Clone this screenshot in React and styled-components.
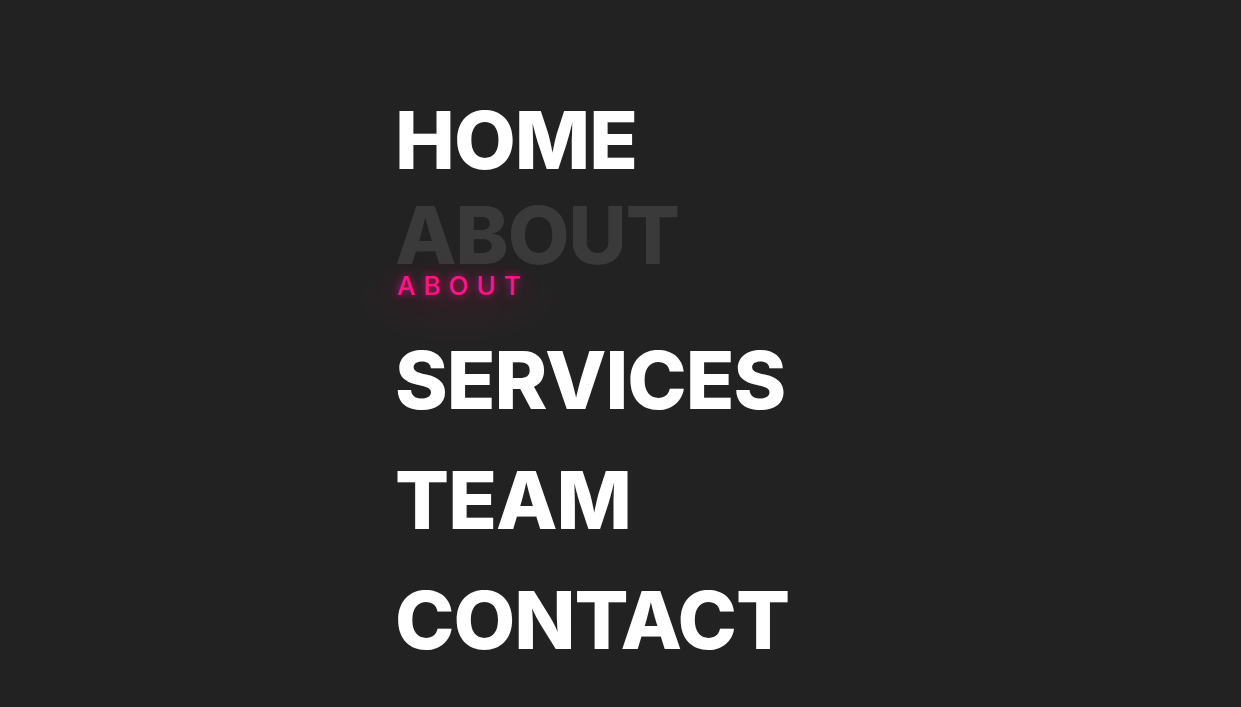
import React from "react";
import styled, { createGlobalStyle } from "styled-components";

const Global = createGlobalStyle`
  html, body { margin: 0; padding: 0; background: #222222; }
  body { font-family: "Inter", "Noto Sans", sans-serif; }
`;

const Page = styled.div`
  min-height: 707px;
  background: #222222;
  display: flex;
  justify-content: flex-start;
`;

const Menu = styled.ul`
  list-style: none;
  margin: 0;
  padding: 80px 0 0 395px;
  display: flex;
  flex-direction: column;
`;

const Item = styled.li`
  position: relative;
  height: 120px;
`;

const Link = styled.a`
  display: block;
  font-family: "Inter", "Noto Sans", sans-serif;
  font-weight: 800;
  font-size: 80px;
  line-height: 120px;
  letter-spacing: -1px;
  text-transform: uppercase;
  color: ${(p) => (p.$active ? "#3a3a3a" : "#ffffff")};
  transform: ${(p) => (p.$active ? "translateY(-25px)" : "none")};
  text-decoration: none;
  white-space: nowrap;
`;

const Label = styled.span`
  position: absolute;
  left: 2px;
  top: 73px;
  font-family: "Inter", "Noto Sans", sans-serif;
  font-weight: 500;
  font-size: 26px;
  letter-spacing: 8px;
  line-height: 26px;
  color: #ff1489;
  text-transform: uppercase;
  text-shadow: 0 0 8px rgba(255, 20, 137, 0.7), 0 0 30px rgba(255, 20, 137, 0.25);
  &::before {
    content: "";
    position: absolute;
    left: -50px;
    top: -25px;
    width: 220px;
    height: 100px;
    border-radius: 50%;
    background: radial-gradient(ellipse at center, rgba(255, 20, 100, 0.06), rgba(255, 20, 100, 0) 70%);
    pointer-events: none;
  }
`;

const items = ["Home", "About", "Services", "Team", "Contact"];

export default function App() {
  return (
    <>
      <Global />
      <Page>
        <Menu>
          {items.map((it) => (
            <Item key={it}>
              <Link href="#" $active={it === "About"}>{it}</Link>
              {it === "About" && <Label>{it}</Label>}
            </Item>
          ))}
        </Menu>
      </Page>
    </>
  );
}
